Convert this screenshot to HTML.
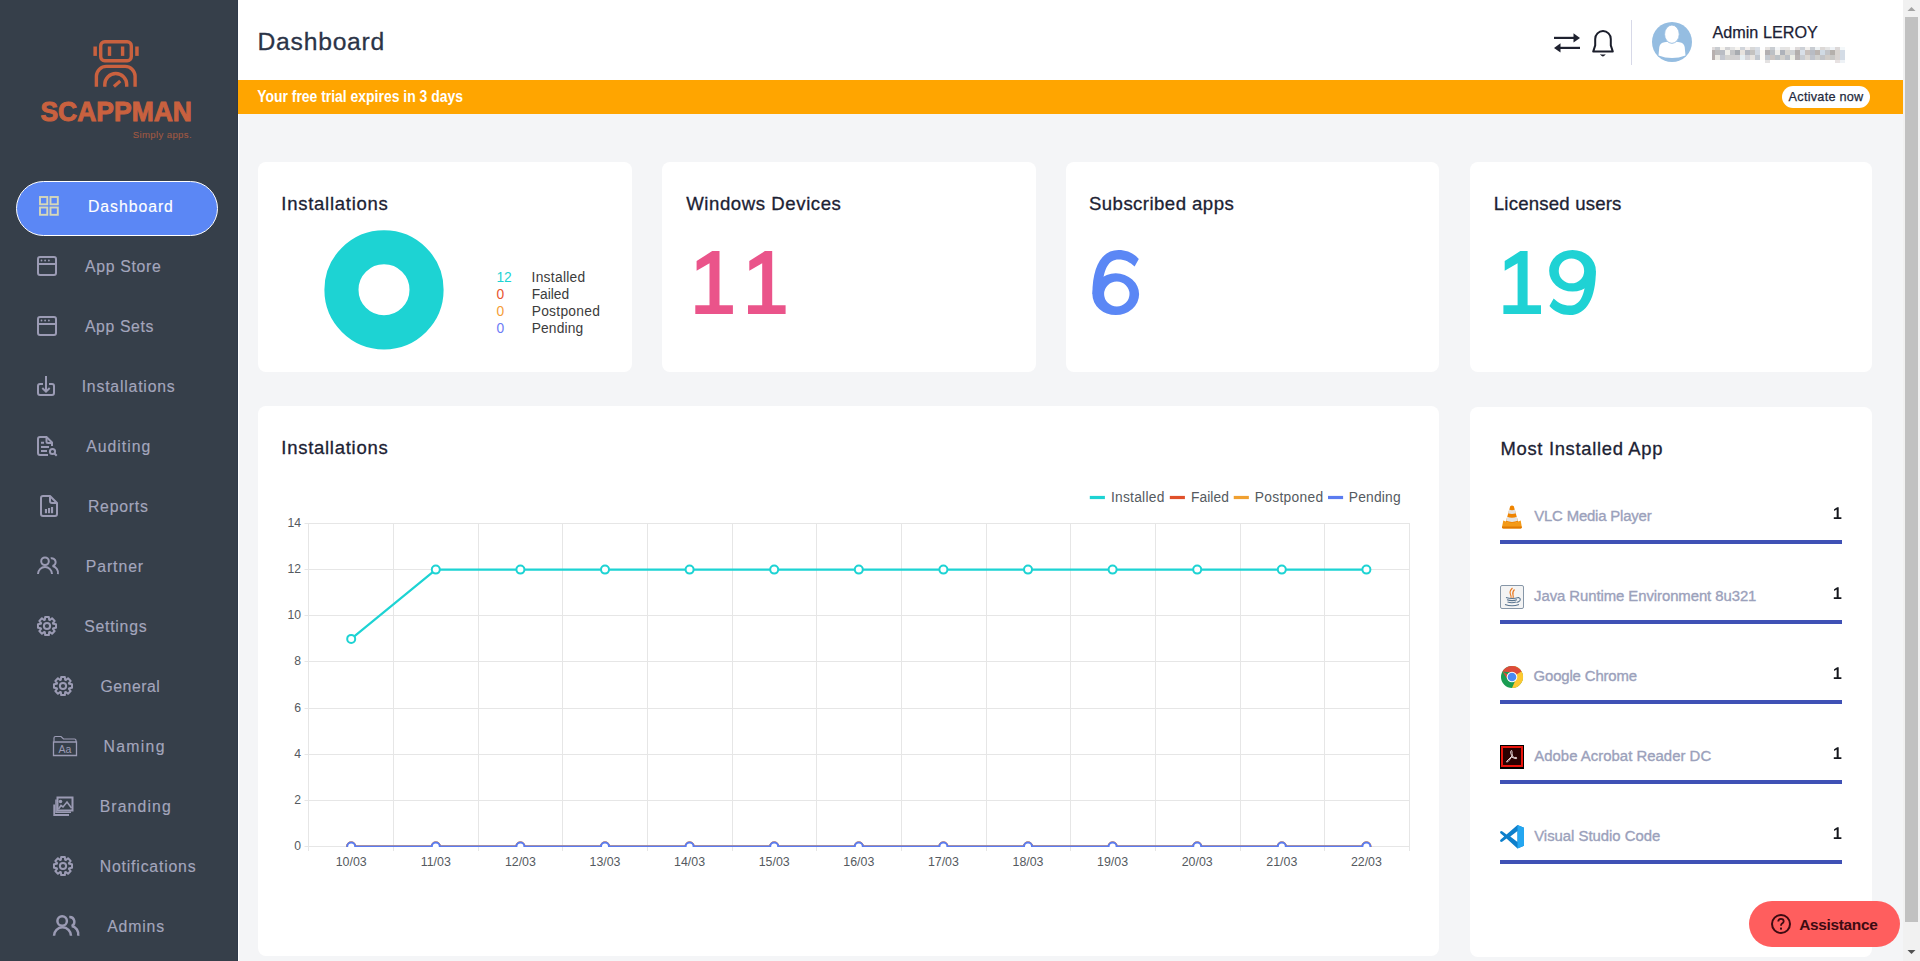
<!DOCTYPE html>
<html><head><meta charset="utf-8"><title>Dashboard</title>
<style>
html,body{margin:0;padding:0;}
body{width:1920px;height:961px;overflow:hidden;position:relative;background:#f4f5f7;font-family:"Liberation Sans",sans-serif;}
.t{position:absolute;white-space:nowrap;}
.a{position:absolute;overflow:visible;}
</style></head><body>
<div style="position:absolute;left:0;top:0;width:238px;height:961px;background:#363f4a"></div>
<div style="position:absolute;left:237px;top:0;width:1px;height:961px;background:#2f3a4b"></div>
<div style="position:absolute;left:238px;top:114px;width:1px;height:847px;background:#ffffff"></div>
<svg class="a" style="left:0;top:0" width="238" height="150" viewBox="0 0 238 150">
<g fill="none" stroke="#c9613f" stroke-width="3.4">
<rect x="100.7" y="41.7" width="30.6" height="19.1" rx="4"/>
<path d="M96.4 86.8 V76 a10 10 0 0 1 10 -9.6 H125.1 a10 10 0 0 1 10 9.6 V86.8"/>
<path d="M104.8 86.8 V84.5 a10.95 10.95 0 0 1 21.9 0 V86.8"/>
</g>
<g fill="#c9613f">
<rect x="93.4" y="46.5" width="3.5" height="9.4"/>
<rect x="135.2" y="46.5" width="3.5" height="9.4"/>
<rect x="107.8" y="46.5" width="3.4" height="9.4"/>
<rect x="120.9" y="46.5" width="3.4" height="9.4"/>
</g>
<path d="M113.9 86.5 L120.3 81" stroke="#c9613f" stroke-width="3.2" fill="none"/>
</svg>


<div style="position:absolute;left:16px;top:181px;width:200px;height:53px;border:1px solid #fff;border-radius:28px;background:#5b87f5"></div>
<svg class="a" style="left:39px;top:196px" width="21" height="21" viewBox="0 0 21 21"><g fill="none" stroke="#d5d7b9" stroke-width="1.9">
<rect x="1" y="1" width="7.3" height="7.3"/><rect x="11.5" y="1" width="7.3" height="7.3"/>
<rect x="1" y="11.5" width="7.3" height="7.3"/><rect x="11.5" y="11.5" width="7.3" height="7.3"/></g></svg>













<svg class="a" style="left:0;top:0" width="238" height="961" viewBox="0 0 238 961"><rect x="38" y="257" width="18" height="18" rx="2" fill="none" stroke="#9b9bb4" stroke-width="2"/><line x1="38" y1="264" x2="56" y2="264" stroke="#9b9bb4" stroke-width="2"/><circle cx="41.5" cy="260.5" r="0.9" fill="#9b9bb4"/><circle cx="45.1" cy="260.5" r="0.9" fill="#9b9bb4"/><circle cx="48.9" cy="260.5" r="0.9" fill="#9b9bb4"/><rect x="38" y="317" width="18" height="18" rx="2" fill="none" stroke="#9b9bb4" stroke-width="2"/><line x1="38" y1="324" x2="56" y2="324" stroke="#9b9bb4" stroke-width="2"/><circle cx="41.5" cy="320.5" r="0.9" fill="#9b9bb4"/><circle cx="45.1" cy="320.5" r="0.9" fill="#9b9bb4"/><circle cx="48.9" cy="320.5" r="0.9" fill="#9b9bb4"/><path d="M43 384 H40 a2 2 0 0 0 -2 2 V393 a2 2 0 0 0 2 2 H52 a2 2 0 0 0 2 -2 V386 a2 2 0 0 0 -2 -2 H49" fill="none" stroke="#9b9bb4" stroke-width="2"/><path d="M46 376 V391 M42.3 388 L46 391.6 L49.7 388" fill="none" stroke="#9b9bb4" stroke-width="2"/><path d="M48 455 H40 a2 2 0 0 1 -2 -2 V439 a2 2 0 0 1 2 -2 H46.5 L52 442.5 V446" fill="none" stroke="#9b9bb4" stroke-width="2"/><path d="M46.5 437 V441.5 a1.5 1.5 0 0 0 1.5 1.5 H52" fill="none" stroke="#9b9bb4" stroke-width="2"/><path d="M41 442.8 H44 M41 447 H49 M41 451 H47" stroke="#9b9bb4" stroke-width="2"/><circle cx="52.5" cy="451.5" r="2.6" fill="none" stroke="#9b9bb4" stroke-width="2"/><path d="M54.5 453.5 L56.7 455.7" stroke="#9b9bb4" stroke-width="2"/><path d="M50 496 H43 a2 2 0 0 0 -2 2 V514 a2 2 0 0 0 2 2 H55 a2 2 0 0 0 2 -2 V503 Z" fill="none" stroke="#9b9bb4" stroke-width="2" stroke-linejoin="round"/><path d="M50 496 V501 a2 2 0 0 0 2 2 H57" fill="none" stroke="#9b9bb4" stroke-width="2"/><rect x="44.9" y="509" width="2.1" height="4.2" fill="#9b9bb4"/><rect x="48" y="508" width="2.1" height="5.2" fill="#9b9bb4"/><rect x="51" y="507" width="2.1" height="6.2" fill="#9b9bb4"/><g transform="translate(37,555) scale(1.0)" fill="none" stroke="#9b9bb4" stroke-width="2.00" stroke-linecap="butt"><circle cx="8" cy="6.25" r="3.8"/><path d="M1 19.1 A7 7 0 0 1 15 19.1"/><path d="M13.75 3.3 A3.8 3.8 0 0 1 15.6 11"/><path d="M15.6 11 A7 7 0 0 1 20.9 19.1"/></g><polygon points="53.24,623.86 56.02,624.17 56.02,627.83 53.24,628.14 52.93,628.90 54.67,631.08 52.08,633.67 49.90,631.93 49.14,632.24 48.83,635.02 45.17,635.02 44.86,632.24 44.10,631.93 41.92,633.67 39.33,631.08 41.07,628.90 40.76,628.14 37.98,627.83 37.98,624.17 40.76,623.86 41.07,623.10 39.33,620.92 41.92,618.33 44.10,620.07 44.86,619.76 45.17,616.98 48.83,616.98 49.14,619.76 49.90,620.07 52.08,618.33 54.67,620.92 52.93,623.10" fill="none" stroke="#9b9bb4" stroke-width="2" stroke-linejoin="round"/><circle cx="47" cy="626" r="3.1" fill="none" stroke="#9b9bb4" stroke-width="2"/><polygon points="69.24,683.86 72.02,684.17 72.02,687.83 69.24,688.14 68.93,688.90 70.67,691.08 68.08,693.67 65.90,691.93 65.14,692.24 64.83,695.02 61.17,695.02 60.86,692.24 60.10,691.93 57.92,693.67 55.33,691.08 57.07,688.90 56.76,688.14 53.98,687.83 53.98,684.17 56.76,683.86 57.07,683.10 55.33,680.92 57.92,678.33 60.10,680.07 60.86,679.76 61.17,676.98 64.83,676.98 65.14,679.76 65.90,680.07 68.08,678.33 70.67,680.92 68.93,683.10" fill="none" stroke="#9b9bb4" stroke-width="2" stroke-linejoin="round"/><circle cx="63" cy="686" r="3.1" fill="none" stroke="#9b9bb4" stroke-width="2"/><polygon points="69.24,863.86 72.02,864.17 72.02,867.83 69.24,868.14 68.93,868.90 70.67,871.08 68.08,873.67 65.90,871.93 65.14,872.24 64.83,875.02 61.17,875.02 60.86,872.24 60.10,871.93 57.92,873.67 55.33,871.08 57.07,868.90 56.76,868.14 53.98,867.83 53.98,864.17 56.76,863.86 57.07,863.10 55.33,860.92 57.92,858.33 60.10,860.07 60.86,859.76 61.17,856.98 64.83,856.98 65.14,859.76 65.90,860.07 68.08,858.33 70.67,860.92 68.93,863.10" fill="none" stroke="#9b9bb4" stroke-width="2" stroke-linejoin="round"/><circle cx="63" cy="866" r="3.1" fill="none" stroke="#9b9bb4" stroke-width="2"/><path d="M54 741.5 V738 a1.5 1.5 0 0 1 1.5 -1.5 H61 L63.5 739 H74.5 a1.5 1.5 0 0 1 1.5 1.5 V742" fill="none" stroke="#9b9bb4" stroke-width="1.2"/><path d="M53.5 742 H76.5 V755.5 H53.5 Z" fill="none" stroke="#9b9bb4" stroke-width="1.3"/><text x="58.5" y="752.5" font-family="Liberation Sans" font-size="10.5" fill="#9b9bb4">Aa</text><rect x="57.5" y="797.5" width="15" height="13" fill="none" stroke="#9b9bb4" stroke-width="2"/><path d="M56 799.5 H56 V811.5 H70" fill="none" stroke="#9b9bb4" stroke-width="0"/><path d="M54.2 804.5 V815 H69" fill="none" stroke="#9b9bb4" stroke-width="1.8"/><path d="M56 799.5 V812.2 H71" fill="none" stroke="#9b9bb4" stroke-width="1.5"/><circle cx="60.5" cy="801.5" r="1.8" fill="#9b9bb4"/><path d="M58.5 809 L61 805.5 L63 807 L67 802 L71.5 808" fill="none" stroke="#9b9bb4" stroke-width="1.6"/><g fill="none" stroke="#9b9bb4" stroke-width="2.5"><circle cx="62.15" cy="920.9" r="4.75"/><path d="M54 935.8 A8.5 8.5 0 0 1 71 935.8"/><path d="M69.3 917 A4.75 4.75 0 0 1 71.7 926"/><path d="M71.7 926 A8.3 8.5 0 0 1 78.2 935.8"/></g></svg>
<div style="position:absolute;left:238px;top:0;width:1665px;height:80px;background:#fff"></div>

<svg class="a" style="left:1540px;top:10px" width="160" height="65" viewBox="0 0 160 65">
<g fill="#1f2230">
<rect x="14" y="26.8" width="20" height="2.2"/><path d="M33.5 23.3 L40 27.9 L33.5 32.5 Z"/>
<rect x="20" y="36.8" width="20" height="2.2"/><path d="M20.5 33.3 L14 37.9 L20.5 42.5 Z"/>
</g>
<path d="M53.2 41.6 H72.8 L70.8 35.4 V28.9 A7.8 7.8 0 0 0 55.2 28.9 V35.4 Z" fill="none" stroke="#1a1d2a" stroke-width="2" stroke-linejoin="round"/>
<path d="M60 43.9 Q62.9 45.3 65.8 43.9 Q63.5 47.2 62.3 46.2 Q61 45.6 60 43.9 Z" fill="#1a1d2a"/>
<rect x="91" y="10" width="1" height="45" fill="#d7d9e8"/>
<circle cx="132" cy="32" r="20" fill="#95bde1"/>
<path d="M118.5 45.5 L119.3 37 Q120 33 124.5 32.2 L127.5 31.8 Q132 35 136.5 31.8 L139.5 32.2 Q144 33 144.7 37 L145.5 45.5 Q132 50.5 118.5 45.5 Z" fill="#fff"/>
<ellipse cx="131.9" cy="24.2" rx="7.3" ry="9.1" fill="#fff" stroke="#95bde1" stroke-width="0.8"/>
</svg>

<svg class="a" style="left:0;top:0" width="1920" height="80" viewBox="0 0 1920 80"><rect x="1712" y="47" width="3" height="3" fill="#e0dcdc"/><rect x="1715" y="47" width="5" height="3" fill="#c9ccd0"/><rect x="1720" y="47" width="5" height="3" fill="#f5f3ef"/><rect x="1725" y="47" width="5" height="3" fill="#d2d2d4"/><rect x="1730" y="47" width="5" height="3" fill="#e4e4e4"/><rect x="1735" y="47" width="5" height="3" fill="#f7f5f1"/><rect x="1740" y="47" width="5" height="3" fill="#d0d4da"/><rect x="1745" y="47" width="5" height="3" fill="#f3efed"/><rect x="1750" y="47" width="5" height="3" fill="#d8d8d8"/><rect x="1755" y="47" width="5" height="3" fill="#d9dee5"/><rect x="1760" y="47" width="5" height="3" fill="#ffffff"/><rect x="1765" y="47" width="5" height="3" fill="#e5e2e0"/><rect x="1770" y="47" width="5" height="3" fill="#c9cdd2"/><rect x="1775" y="47" width="5" height="3" fill="#f4f6f8"/><rect x="1780" y="47" width="5" height="3" fill="#e4e4e4"/><rect x="1785" y="47" width="5" height="3" fill="#e6e4e2"/><rect x="1790" y="47" width="5" height="3" fill="#fafafa"/><rect x="1795" y="47" width="5" height="3" fill="#dedada"/><rect x="1800" y="47" width="5" height="3" fill="#ccd0d6"/><rect x="1805" y="47" width="5" height="3" fill="#f2f0ee"/><rect x="1810" y="47" width="5" height="3" fill="#c8ccd2"/><rect x="1815" y="47" width="5" height="3" fill="#eef2f4"/><rect x="1820" y="47" width="5" height="3" fill="#dcd8d6"/><rect x="1825" y="47" width="5" height="3" fill="#e4e4e4"/><rect x="1830" y="47" width="5" height="3" fill="#eef2f6"/><rect x="1835" y="47" width="5" height="3" fill="#dcd8d8"/><rect x="1840" y="47" width="5" height="3" fill="#f4f8fa"/><rect x="1712" y="50" width="3" height="5" fill="#b8b0ae"/><rect x="1715" y="50" width="5" height="5" fill="#bdbcbc"/><rect x="1720" y="50" width="5" height="5" fill="#b9bdc4"/><rect x="1725" y="50" width="5" height="5" fill="#efefea"/><rect x="1730" y="50" width="5" height="5" fill="#c4c4c6"/><rect x="1735" y="50" width="5" height="5" fill="#a8abb0"/><rect x="1740" y="50" width="5" height="5" fill="#e6e2de"/><rect x="1745" y="50" width="5" height="5" fill="#b4b8c0"/><rect x="1750" y="50" width="5" height="5" fill="#c4c2c0"/><rect x="1755" y="50" width="5" height="5" fill="#d4dae2"/><rect x="1760" y="50" width="5" height="5" fill="#fdfaf6"/><rect x="1765" y="50" width="5" height="5" fill="#b3afb0"/><rect x="1770" y="50" width="5" height="5" fill="#bcc0c4"/><rect x="1775" y="50" width="5" height="5" fill="#efeeea"/><rect x="1780" y="50" width="5" height="5" fill="#aeb2ba"/><rect x="1785" y="50" width="5" height="5" fill="#d6d4d0"/><rect x="1790" y="50" width="5" height="5" fill="#cfd2d4"/><rect x="1795" y="50" width="5" height="5" fill="#b2aeac"/><rect x="1800" y="50" width="5" height="5" fill="#d8dfe8"/><rect x="1805" y="50" width="5" height="5" fill="#c8c0bc"/><rect x="1810" y="50" width="5" height="5" fill="#b8bcc4"/><rect x="1815" y="50" width="5" height="5" fill="#bab4b0"/><rect x="1820" y="50" width="5" height="5" fill="#d0dae4"/><rect x="1825" y="50" width="5" height="5" fill="#c2c4c8"/><rect x="1830" y="50" width="5" height="5" fill="#b4b0ac"/><rect x="1835" y="50" width="5" height="5" fill="#d8d4d0"/><rect x="1840" y="50" width="5" height="5" fill="#d4dce6"/><rect x="1712" y="55" width="3" height="5" fill="#b8b0ae"/><rect x="1715" y="55" width="5" height="5" fill="#eceae4"/><rect x="1720" y="55" width="5" height="5" fill="#c4c8d0"/><rect x="1725" y="55" width="5" height="5" fill="#d4d4d2"/><rect x="1730" y="55" width="5" height="5" fill="#d2d0d0"/><rect x="1735" y="55" width="5" height="5" fill="#d2d0d2"/><rect x="1740" y="55" width="5" height="5" fill="#e6eef2"/><rect x="1745" y="55" width="5" height="5" fill="#d4d4d8"/><rect x="1750" y="55" width="5" height="5" fill="#e8e4e0"/><rect x="1755" y="55" width="5" height="5" fill="#c2c8d0"/><rect x="1760" y="55" width="5" height="5" fill="#fdfaf6"/><rect x="1765" y="55" width="5" height="5" fill="#c4c8ce"/><rect x="1770" y="55" width="5" height="5" fill="#ccc6c2"/><rect x="1775" y="55" width="5" height="5" fill="#bcc2c6"/><rect x="1780" y="55" width="5" height="5" fill="#d2d0cc"/><rect x="1785" y="55" width="5" height="5" fill="#bcc0c6"/><rect x="1790" y="55" width="5" height="5" fill="#eceee6"/><rect x="1795" y="55" width="5" height="5" fill="#b8b4b4"/><rect x="1800" y="55" width="5" height="5" fill="#c8ccd2"/><rect x="1805" y="55" width="5" height="5" fill="#dcd8d4"/><rect x="1810" y="55" width="5" height="5" fill="#c0c4cc"/><rect x="1815" y="55" width="5" height="5" fill="#d0d0ce"/><rect x="1820" y="55" width="5" height="5" fill="#c2c4c8"/><rect x="1825" y="55" width="5" height="5" fill="#d0ccc8"/><rect x="1830" y="55" width="5" height="5" fill="#c8c8c6"/><rect x="1835" y="55" width="5" height="5" fill="#d8d4d2"/><rect x="1840" y="55" width="5" height="5" fill="#d4dce6"/><rect x="1765" y="60" width="5" height="3" fill="#e4e2e2"/><rect x="1835" y="60" width="5" height="3" fill="#e8e2e2"/><rect x="1840" y="60" width="5" height="3" fill="#eef2f6"/></svg>
<div style="position:absolute;left:238px;top:80px;width:1665px;height:34px;background:#ffa500"></div>

<div style="position:absolute;left:1782px;top:86px;width:88px;height:22px;border-radius:11px;background:#fff"></div>

<div style="position:absolute;left:258px;top:162px;width:374px;height:210px;background:#fff;border-radius:8px"></div>
<div style="position:absolute;left:662px;top:162px;width:374px;height:210px;background:#fff;border-radius:8px"></div>
<div style="position:absolute;left:1066px;top:162px;width:373px;height:210px;background:#fff;border-radius:8px"></div>
<div style="position:absolute;left:1470px;top:162px;width:402px;height:210px;background:#fff;border-radius:8px"></div>
<div style="position:absolute;left:258px;top:406px;width:1181px;height:550px;background:#fff;border-radius:8px"></div>
<div style="position:absolute;left:1470px;top:407px;width:402px;height:550px;background:#fff;border-radius:8px"></div>






<svg class="a" style="left:314px;top:220px" width="140" height="140" viewBox="0 0 140 140">
<circle cx="70" cy="69.8" r="42.55" fill="none" stroke="#1dd3d3" stroke-width="34.1"/></svg>








<svg class="a" style="left:0;top:0" width="1920" height="400" viewBox="0 0 1920 400"><polygon fill="#ea548a" points="712.20,251.10 719.50,251.10 719.50,305.20 732.90,305.20 732.90,314.00 695.30,314.00 695.30,305.20 709.50,305.20 709.50,263.30 696.60,270.70 696.60,261.00"/><polygon fill="#ea548a" points="764.90,251.10 772.20,251.10 772.20,305.20 785.60,305.20 785.60,314.00 748.00,314.00 748.00,305.20 762.20,305.20 762.20,263.30 749.30,270.70 749.30,261.00"/><polygon fill="#1fd2d4" points="1520.30,251.10 1527.60,251.10 1527.60,305.20 1541.00,305.20 1541.00,314.00 1503.40,314.00 1503.40,305.20 1517.60,305.20 1517.60,263.30 1504.70,270.70 1504.70,261.00"/></svg>
<svg class="a" style="left:0;top:0" width="1920" height="400" viewBox="0 0 1920 400"><g fill="#5b87f5"><path fill-rule="evenodd" d="M1139.1 294.15 A23.35 20.85 0 1 1 1092.4 294.15 A23.35 20.85 0 1 1 1139.1 294.15 Z M1129.5 294 A12.7 12.45 0 1 0 1104.1 294 A12.7 12.45 0 1 0 1129.5 294 Z"/><path d="M1092.4 294 C1092.4 268, 1101 249.9, 1118.5 249.9 C1127 249.9, 1134 253.3, 1138.8 258.9 L1134.6 266.5 C1130 262, 1125 259.4, 1118.5 259.4 C1109 259.4, 1102.3 268, 1102.3 294 Z"/></g><g fill="#1fd2d4" transform="translate(1572.5 282.45) rotate(180) translate(-1115.75 -282.45)"><path fill-rule="evenodd" d="M1139.1 294.15 A23.35 20.85 0 1 1 1092.4 294.15 A23.35 20.85 0 1 1 1139.1 294.15 Z M1129.5 294 A12.7 12.45 0 1 0 1104.1 294 A12.7 12.45 0 1 0 1129.5 294 Z"/><path d="M1092.4 294 C1092.4 268, 1101 249.9, 1118.5 249.9 C1127 249.9, 1134 253.3, 1138.8 258.9 L1134.6 266.5 C1130 262, 1125 259.4, 1118.5 259.4 C1109 259.4, 1102.3 268, 1102.3 294 Z"/></g></svg>
<svg class="a" style="left:0;top:0" width="1920" height="961" viewBox="0 0 1920 961"><line x1="304.5" y1="846.5" x2="1410" y2="846.5" stroke="#e6e6e6" stroke-width="1"/><line x1="304.5" y1="800.5" x2="1410" y2="800.5" stroke="#e6e6e6" stroke-width="1"/><line x1="304.5" y1="754.5" x2="1410" y2="754.5" stroke="#e6e6e6" stroke-width="1"/><line x1="304.5" y1="708.5" x2="1410" y2="708.5" stroke="#e6e6e6" stroke-width="1"/><line x1="304.5" y1="661.5" x2="1410" y2="661.5" stroke="#e6e6e6" stroke-width="1"/><line x1="304.5" y1="615.5" x2="1410" y2="615.5" stroke="#e6e6e6" stroke-width="1"/><line x1="304.5" y1="569.5" x2="1410" y2="569.5" stroke="#e6e6e6" stroke-width="1"/><line x1="304.5" y1="523.5" x2="1410" y2="523.5" stroke="#e6e6e6" stroke-width="1"/><line x1="308.5" y1="523" x2="308.5" y2="851" stroke="#e6e6e6" stroke-width="1"/><line x1="393.5" y1="523" x2="393.5" y2="851" stroke="#e6e6e6" stroke-width="1"/><line x1="478.5" y1="523" x2="478.5" y2="851" stroke="#e6e6e6" stroke-width="1"/><line x1="562.5" y1="523" x2="562.5" y2="851" stroke="#e6e6e6" stroke-width="1"/><line x1="647.5" y1="523" x2="647.5" y2="851" stroke="#e6e6e6" stroke-width="1"/><line x1="732.5" y1="523" x2="732.5" y2="851" stroke="#e6e6e6" stroke-width="1"/><line x1="816.5" y1="523" x2="816.5" y2="851" stroke="#e6e6e6" stroke-width="1"/><line x1="901.5" y1="523" x2="901.5" y2="851" stroke="#e6e6e6" stroke-width="1"/><line x1="986.5" y1="523" x2="986.5" y2="851" stroke="#e6e6e6" stroke-width="1"/><line x1="1070.5" y1="523" x2="1070.5" y2="851" stroke="#e6e6e6" stroke-width="1"/><line x1="1155.5" y1="523" x2="1155.5" y2="851" stroke="#e6e6e6" stroke-width="1"/><line x1="1240.5" y1="523" x2="1240.5" y2="851" stroke="#e6e6e6" stroke-width="1"/><line x1="1324.5" y1="523" x2="1324.5" y2="851" stroke="#e6e6e6" stroke-width="1"/><line x1="1409.5" y1="523" x2="1409.5" y2="851" stroke="#e6e6e6" stroke-width="1"/><polyline fill="none" stroke="#1dd3d3" stroke-width="2.2" points="351.2,638.9 435.8,569.6 520.4,569.6 605.0,569.6 689.6,569.6 774.2,569.6 858.8,569.6 943.4,569.6 1028.0,569.6 1112.6,569.6 1197.2,569.6 1281.8,569.6 1366.4,569.6"/><circle cx="351.2" cy="638.9" r="4" fill="#fff" stroke="#1dd3d3" stroke-width="2"/><circle cx="435.8" cy="569.6" r="4" fill="#fff" stroke="#1dd3d3" stroke-width="2"/><circle cx="520.4" cy="569.6" r="4" fill="#fff" stroke="#1dd3d3" stroke-width="2"/><circle cx="605.0" cy="569.6" r="4" fill="#fff" stroke="#1dd3d3" stroke-width="2"/><circle cx="689.6" cy="569.6" r="4" fill="#fff" stroke="#1dd3d3" stroke-width="2"/><circle cx="774.2" cy="569.6" r="4" fill="#fff" stroke="#1dd3d3" stroke-width="2"/><circle cx="858.8" cy="569.6" r="4" fill="#fff" stroke="#1dd3d3" stroke-width="2"/><circle cx="943.4" cy="569.6" r="4" fill="#fff" stroke="#1dd3d3" stroke-width="2"/><circle cx="1028.0" cy="569.6" r="4" fill="#fff" stroke="#1dd3d3" stroke-width="2"/><circle cx="1112.6" cy="569.6" r="4" fill="#fff" stroke="#1dd3d3" stroke-width="2"/><circle cx="1197.2" cy="569.6" r="4" fill="#fff" stroke="#1dd3d3" stroke-width="2"/><circle cx="1281.8" cy="569.6" r="4" fill="#fff" stroke="#1dd3d3" stroke-width="2"/><circle cx="1366.4" cy="569.6" r="4" fill="#fff" stroke="#1dd3d3" stroke-width="2"/><defs><clipPath id="cp"><rect x="300" y="500" width="1120" height="347"/></clipPath></defs><g clip-path="url(#cp)"><polyline fill="none" stroke="#e0502a" stroke-width="2.2" points="351.2,846.5 435.8,846.5 520.4,846.5 605.0,846.5 689.6,846.5 774.2,846.5 858.8,846.5 943.4,846.5 1028.0,846.5 1112.6,846.5 1197.2,846.5 1281.8,846.5 1366.4,846.5"/><circle cx="351.2" cy="846.5" r="4" fill="#fff" stroke="#e0502a" stroke-width="2"/><circle cx="435.8" cy="846.5" r="4" fill="#fff" stroke="#e0502a" stroke-width="2"/><circle cx="520.4" cy="846.5" r="4" fill="#fff" stroke="#e0502a" stroke-width="2"/><circle cx="605.0" cy="846.5" r="4" fill="#fff" stroke="#e0502a" stroke-width="2"/><circle cx="689.6" cy="846.5" r="4" fill="#fff" stroke="#e0502a" stroke-width="2"/><circle cx="774.2" cy="846.5" r="4" fill="#fff" stroke="#e0502a" stroke-width="2"/><circle cx="858.8" cy="846.5" r="4" fill="#fff" stroke="#e0502a" stroke-width="2"/><circle cx="943.4" cy="846.5" r="4" fill="#fff" stroke="#e0502a" stroke-width="2"/><circle cx="1028.0" cy="846.5" r="4" fill="#fff" stroke="#e0502a" stroke-width="2"/><circle cx="1112.6" cy="846.5" r="4" fill="#fff" stroke="#e0502a" stroke-width="2"/><circle cx="1197.2" cy="846.5" r="4" fill="#fff" stroke="#e0502a" stroke-width="2"/><circle cx="1281.8" cy="846.5" r="4" fill="#fff" stroke="#e0502a" stroke-width="2"/><circle cx="1366.4" cy="846.5" r="4" fill="#fff" stroke="#e0502a" stroke-width="2"/><polyline fill="none" stroke="#f0a030" stroke-width="2.2" points="351.2,846.5 435.8,846.5 520.4,846.5 605.0,846.5 689.6,846.5 774.2,846.5 858.8,846.5 943.4,846.5 1028.0,846.5 1112.6,846.5 1197.2,846.5 1281.8,846.5 1366.4,846.5"/><circle cx="351.2" cy="846.5" r="4" fill="#fff" stroke="#f0a030" stroke-width="2"/><circle cx="435.8" cy="846.5" r="4" fill="#fff" stroke="#f0a030" stroke-width="2"/><circle cx="520.4" cy="846.5" r="4" fill="#fff" stroke="#f0a030" stroke-width="2"/><circle cx="605.0" cy="846.5" r="4" fill="#fff" stroke="#f0a030" stroke-width="2"/><circle cx="689.6" cy="846.5" r="4" fill="#fff" stroke="#f0a030" stroke-width="2"/><circle cx="774.2" cy="846.5" r="4" fill="#fff" stroke="#f0a030" stroke-width="2"/><circle cx="858.8" cy="846.5" r="4" fill="#fff" stroke="#f0a030" stroke-width="2"/><circle cx="943.4" cy="846.5" r="4" fill="#fff" stroke="#f0a030" stroke-width="2"/><circle cx="1028.0" cy="846.5" r="4" fill="#fff" stroke="#f0a030" stroke-width="2"/><circle cx="1112.6" cy="846.5" r="4" fill="#fff" stroke="#f0a030" stroke-width="2"/><circle cx="1197.2" cy="846.5" r="4" fill="#fff" stroke="#f0a030" stroke-width="2"/><circle cx="1281.8" cy="846.5" r="4" fill="#fff" stroke="#f0a030" stroke-width="2"/><circle cx="1366.4" cy="846.5" r="4" fill="#fff" stroke="#f0a030" stroke-width="2"/><polyline fill="none" stroke="#5b7cf0" stroke-width="2.2" points="351.2,846.5 435.8,846.5 520.4,846.5 605.0,846.5 689.6,846.5 774.2,846.5 858.8,846.5 943.4,846.5 1028.0,846.5 1112.6,846.5 1197.2,846.5 1281.8,846.5 1366.4,846.5"/><circle cx="351.2" cy="846.5" r="4" fill="#fff" stroke="#5b7cf0" stroke-width="2"/><circle cx="435.8" cy="846.5" r="4" fill="#fff" stroke="#5b7cf0" stroke-width="2"/><circle cx="520.4" cy="846.5" r="4" fill="#fff" stroke="#5b7cf0" stroke-width="2"/><circle cx="605.0" cy="846.5" r="4" fill="#fff" stroke="#5b7cf0" stroke-width="2"/><circle cx="689.6" cy="846.5" r="4" fill="#fff" stroke="#5b7cf0" stroke-width="2"/><circle cx="774.2" cy="846.5" r="4" fill="#fff" stroke="#5b7cf0" stroke-width="2"/><circle cx="858.8" cy="846.5" r="4" fill="#fff" stroke="#5b7cf0" stroke-width="2"/><circle cx="943.4" cy="846.5" r="4" fill="#fff" stroke="#5b7cf0" stroke-width="2"/><circle cx="1028.0" cy="846.5" r="4" fill="#fff" stroke="#5b7cf0" stroke-width="2"/><circle cx="1112.6" cy="846.5" r="4" fill="#fff" stroke="#5b7cf0" stroke-width="2"/><circle cx="1197.2" cy="846.5" r="4" fill="#fff" stroke="#5b7cf0" stroke-width="2"/><circle cx="1281.8" cy="846.5" r="4" fill="#fff" stroke="#5b7cf0" stroke-width="2"/><circle cx="1366.4" cy="846.5" r="4" fill="#fff" stroke="#5b7cf0" stroke-width="2"/></g><rect x="1089.8" y="495.9" width="15.1" height="3.2" fill="#1dd3d3"/><rect x="1169.8" y="495.9" width="15.1" height="3.2" fill="#e0502a"/><rect x="1233.75" y="495.9" width="15.1" height="3.2" fill="#f0a030"/><rect x="1328" y="495.9" width="15.1" height="3.2" fill="#5b7cf0"/></svg>





<div style="position:absolute;left:1500px;top:540px;width:342px;height:4px;background:#3f51b5"></div>

<div style="position:absolute;left:1500px;top:620px;width:342px;height:4px;background:#3f51b5"></div>

<div style="position:absolute;left:1500px;top:700px;width:342px;height:4px;background:#3f51b5"></div>

<div style="position:absolute;left:1500px;top:780px;width:342px;height:4px;background:#3f51b5"></div>

<div style="position:absolute;left:1500px;top:860px;width:342px;height:4px;background:#3f51b5"></div>
<svg class="a" style="left:0;top:0" width="1920" height="961" viewBox="0 0 1920 961"><g transform="translate(1833.8 507.3) scale(0.202 0.186)"><polygon fill="#15171d" points="16.9,0 24.2,0 24.2,54.1 37.6,54.1 37.6,62.9 0,62.9 0,54.1 14.2,54.1 14.2,12.2 1.3,19.6 1.3,9.9"/></g><g transform="translate(1833.8 587.3) scale(0.202 0.186)"><polygon fill="#15171d" points="16.9,0 24.2,0 24.2,54.1 37.6,54.1 37.6,62.9 0,62.9 0,54.1 14.2,54.1 14.2,12.2 1.3,19.6 1.3,9.9"/></g><g transform="translate(1833.8 667.3) scale(0.202 0.186)"><polygon fill="#15171d" points="16.9,0 24.2,0 24.2,54.1 37.6,54.1 37.6,62.9 0,62.9 0,54.1 14.2,54.1 14.2,12.2 1.3,19.6 1.3,9.9"/></g><g transform="translate(1833.8 747.3) scale(0.202 0.186)"><polygon fill="#15171d" points="16.9,0 24.2,0 24.2,54.1 37.6,54.1 37.6,62.9 0,62.9 0,54.1 14.2,54.1 14.2,12.2 1.3,19.6 1.3,9.9"/></g><g transform="translate(1833.8 827.3) scale(0.202 0.186)"><polygon fill="#15171d" points="16.9,0 24.2,0 24.2,54.1 37.6,54.1 37.6,62.9 0,62.9 0,54.1 14.2,54.1 14.2,12.2 1.3,19.6 1.3,9.9"/></g><path d="M1510.2 506.2 Q1512 504.6 1513.8 506.2 L1518.2 522 Q1512 524.6 1505.8 522 Z" fill="#ef8400"/>
<path d="M1509 509.6 Q1512 511 1515 509.6 L1515.9 513.2 Q1512 514.8 1508.1 513.2 Z" fill="#e2e2e2"/>
<path d="M1507.1 516.8 Q1512 518.8 1516.9 516.8 L1517.8 520.8 Q1512 523 1506.2 520.8 Z" fill="#e4e4e4"/>
<path d="M1503.3 520.6 Q1512 525 1520.7 520.6 L1521.8 527 Q1521.8 528.4 1520.5 528.4 H1503.3 Q1502 528.4 1502 527 Z" fill="#f39a18"/>
<path d="M1502 526.6 H1521.8 V527.2 Q1521.8 528.4 1520.5 528.4 H1503.3 Q1502 528.4 1502 527.2 Z" fill="#e07800"/><g transform="translate(1500,585)">
<rect x="0.5" y="0.5" width="23" height="23" rx="1.5" fill="#f4f4f4" stroke="#8797a8" stroke-width="1"/>
<path d="M12.5 3 Q9 6 10.5 9.5 Q11.5 11.5 11 13 M14.5 4.5 Q12 7 13 10 Q13.5 11.5 13 13" fill="none" stroke="#e8761c" stroke-width="1.1"/>
<path d="M6 12.5 Q12 14.5 18.5 12.5 M7 14.8 Q12 16.5 17 14.8 M7.5 17 Q12 18.5 16 17 M5 19.5 Q12 22 19 19.5 M18 12.5 Q21 13 20 15.5 Q19 17 16.5 17.5" fill="none" stroke="#5a7590" stroke-width="1.1"/>
</g><g transform="translate(1512,677)">
<circle r="11" fill="#1a9d52"/>
<path d="M0 -11 A11 11 0 0 1 9.53 5.5 L0 0 Z" fill="#fdc830" transform="rotate(0)"/>
<path d="M-9.53 -5.5 A11 11 0 0 1 9.53 -5.5 L3.5 -2 L0 -4.5 Z" fill="#dd4b3a"/>
<path d="M9.53 -5.5 A11 11 0 0 1 0 11 L3.5 3 Z" fill="#fdc830"/>
<path d="M-9.53 -5.5 L-4 3 L0 0 Z" fill="#dd4b3a"/>
<circle r="5.3" fill="#fff"/><circle r="4.3" fill="#4a8af4"/>
</g><g transform="translate(1500,745)">
<rect x="0" y="0" width="24" height="24" fill="#000"/>
<rect x="1" y="1" width="22" height="21" fill="#e9140b"/>
<rect x="3" y="3" width="18" height="17" fill="#2a0000"/>
<path d="M11.3 5.5 Q10 6.5 11 9 L12 11 L8 15 Q6.5 16.5 6.5 17 Q7.5 17.5 9 15.5 L11.5 12 L15 13.5 Q17 14 17 13 Q16.5 12 14.5 12.5 L12.5 11.5 Q12 8 12 6.5 Q11.8 5 11.3 5.5 Z" fill="none" stroke="#f5e6e6" stroke-width="0.9"/>
</g><g transform="translate(1500,824.5)">
<path d="M17.5 0.5 L24 3.2 V21.3 L17.5 24 L6.5 14 L2.5 17 Q1 18 0.2 16.8 Q-0.3 15.8 0.7 15 L4.2 12 L0.7 9 Q-0.3 8.2 0.2 7.2 Q1 6 2.5 7 L6.5 10 Z M17.5 6.5 L10.3 12 L17.5 17.5 Z" fill="#0d7fcb" fill-rule="evenodd"/>
<path d="M17.5 0.5 L24 3.2 V21.3 L17.5 24 Z" fill="#24a6f0"/>
</g></svg>
<div style="position:absolute;left:1749px;top:901px;width:151px;height:46px;border-radius:23px;background:#ff5e5e"></div>
<svg class="a" style="left:1770px;top:913px" width="22" height="22" viewBox="0 0 22 22">
<circle cx="11" cy="11" r="9" fill="none" stroke="#3d0b12" stroke-width="2"/>
<path d="M8.3 8.6 Q8.3 5.8 11 5.8 Q13.7 5.8 13.7 8.3 Q13.7 9.8 12 10.6 Q11 11.2 11 12.8" fill="none" stroke="#3d0b12" stroke-width="1.8"/>
<rect x="10" y="14.6" width="2" height="2" fill="#3d0b12"/></svg>

<div style="position:absolute;left:1903px;top:0;width:17px;height:961px;background:#f1f1f1"></div>
<div style="position:absolute;left:1905px;top:17px;width:13px;height:905px;background:#c1c1c1"></div>
<svg class="a" style="left:1903px;top:0" width="17" height="961" viewBox="0 0 17 961">
<path d="M4.5 11 L8.5 7 L12.5 11 Z" fill="#a3a3a3"/><path d="M4.5 950 L8.5 954 L12.5 950 Z" fill="#505050"/></svg>
<svg class="a" style="left:0;top:0" width="1920" height="961" viewBox="0 0 1920 961" font-family="Liberation Sans"><text x="40.46" y="121" font-size="28.0" font-weight="700" fill="#c9613f" stroke="#c9613f" stroke-width="1.0" textLength="151.51" lengthAdjust="spacingAndGlyphs" style="letter-spacing:0.000px">SCAPPMAN</text><text x="132.77" y="138" font-size="9.6" font-weight="400" fill="#9e5843" stroke="#9e5843" stroke-width="0.15" style="letter-spacing:0.359px">Simply apps.</text><text x="88.00" y="212" font-size="15.8" font-weight="400" fill="#ffffff" stroke="#ffffff" stroke-width="0.15" style="letter-spacing:0.952px">Dashboard</text><text x="84.97" y="272" font-size="15.8" font-weight="400" fill="#a4a6bd" stroke="#a4a6bd" stroke-width="0.15" style="letter-spacing:0.683px">App Store</text><text x="84.97" y="332" font-size="15.8" font-weight="400" fill="#a4a6bd" stroke="#a4a6bd" stroke-width="0.15" style="letter-spacing:0.612px">App Sets</text><text x="81.65" y="392" font-size="15.8" font-weight="400" fill="#a4a6bd" stroke="#a4a6bd" stroke-width="0.15" style="letter-spacing:0.807px">Installations</text><text x="86.17" y="452" font-size="15.8" font-weight="400" fill="#a4a6bd" stroke="#a4a6bd" stroke-width="0.15" style="letter-spacing:1.020px">Auditing</text><text x="87.90" y="512" font-size="15.8" font-weight="400" fill="#a4a6bd" stroke="#a4a6bd" stroke-width="0.15" style="letter-spacing:0.791px">Reports</text><text x="85.70" y="572" font-size="15.8" font-weight="400" fill="#a4a6bd" stroke="#a4a6bd" stroke-width="0.15" style="letter-spacing:0.940px">Partner</text><text x="84.29" y="632" font-size="15.8" font-weight="400" fill="#a4a6bd" stroke="#a4a6bd" stroke-width="0.15" style="letter-spacing:0.742px">Settings</text><text x="100.41" y="692" font-size="15.8" font-weight="400" fill="#a4a6bd" stroke="#a4a6bd" stroke-width="0.15" style="letter-spacing:0.539px">General</text><text x="103.50" y="752" font-size="15.8" font-weight="400" fill="#a4a6bd" stroke="#a4a6bd" stroke-width="0.15" style="letter-spacing:1.312px">Naming</text><text x="99.70" y="812" font-size="15.8" font-weight="400" fill="#a4a6bd" stroke="#a4a6bd" stroke-width="0.15" style="letter-spacing:1.108px">Branding</text><text x="99.70" y="872" font-size="15.8" font-weight="400" fill="#a4a6bd" stroke="#a4a6bd" stroke-width="0.15" style="letter-spacing:0.825px">Notifications</text><text x="107.27" y="932" font-size="15.8" font-weight="400" fill="#a4a6bd" stroke="#a4a6bd" stroke-width="0.15" style="letter-spacing:0.821px">Admins</text><text x="257.47" y="50" font-size="24.7" font-weight="400" fill="#2b3447" stroke="#2b3447" stroke-width="0.3" style="letter-spacing:0.759px">Dashboard</text><text x="1712.47" y="38" font-size="16.2" font-weight="400" fill="#1b2135" stroke="#1b2135" stroke-width="0.25" style="letter-spacing:0.006px">Admin LEROY</text><text x="257.16" y="101.5" font-size="15.6" font-weight="700" fill="#ffffff" textLength="205.79" lengthAdjust="spacingAndGlyphs" style="letter-spacing:0.000px">Your free trial expires in 3 days</text><text x="1788.57" y="101" font-size="12.7" font-weight="400" fill="#232a3d" stroke="#232a3d" stroke-width="0.25" style="letter-spacing:0.254px">Activate now</text><text x="281.30" y="210" font-size="18.5" font-weight="400" fill="#1c2233" stroke="#1c2233" stroke-width="0.3" style="letter-spacing:0.739px">Installations</text><text x="686.23" y="210" font-size="18.6" font-weight="400" fill="#1c2233" stroke="#1c2233" stroke-width="0.3" style="letter-spacing:0.569px">Windows Devices</text><text x="1088.96" y="210" font-size="18.6" font-weight="400" fill="#1c2233" stroke="#1c2233" stroke-width="0.3" style="letter-spacing:0.447px">Subscribed apps</text><text x="1493.77" y="210" font-size="18.6" font-weight="400" fill="#1c2233" stroke="#1c2233" stroke-width="0.3" style="letter-spacing:0.199px">Licensed users</text><text x="281.30" y="454" font-size="18.5" font-weight="400" fill="#1c2233" stroke="#1c2233" stroke-width="0.3" style="letter-spacing:0.722px">Installations</text><text x="1500.49" y="455" font-size="18.4" font-weight="400" fill="#1c2233" stroke="#1c2233" stroke-width="0.3" style="letter-spacing:0.689px">Most Installed App</text><text x="496.45" y="282" font-size="13.8" font-weight="400" fill="#1dd3d3" style="letter-spacing:0.000px">12</text><text x="531.53" y="282" font-size="13.8" font-weight="400" fill="#3c3c3c" style="letter-spacing:0.295px">Installed</text><text x="496.46" y="299" font-size="13.8" font-weight="400" fill="#e8552f" style="letter-spacing:0.000px">0</text><text x="531.67" y="299" font-size="13.8" font-weight="400" fill="#3c3c3c" style="letter-spacing:-0.035px">Failed</text><text x="496.46" y="316" font-size="13.8" font-weight="400" fill="#f59d37" style="letter-spacing:0.000px">0</text><text x="531.67" y="316" font-size="13.8" font-weight="400" fill="#3c3c3c" style="letter-spacing:0.278px">Postponed</text><text x="496.46" y="333" font-size="13.8" font-weight="400" fill="#6d7cf6" style="letter-spacing:0.000px">0</text><text x="531.67" y="333" font-size="13.8" font-weight="400" fill="#3c3c3c" style="letter-spacing:0.145px">Pending</text><text x="301" y="850" font-size="12.2" fill="#555a60" text-anchor="end">0</text><text x="301" y="804" font-size="12.2" fill="#555a60" text-anchor="end">2</text><text x="301" y="758" font-size="12.2" fill="#555a60" text-anchor="end">4</text><text x="301" y="712" font-size="12.2" fill="#555a60" text-anchor="end">6</text><text x="301" y="665" font-size="12.2" fill="#555a60" text-anchor="end">8</text><text x="301" y="619" font-size="12.2" fill="#555a60" text-anchor="end">10</text><text x="301" y="573" font-size="12.2" fill="#555a60" text-anchor="end">12</text><text x="301" y="527" font-size="12.2" fill="#555a60" text-anchor="end">14</text><text x="351.20" y="866" font-size="12.4" fill="#555a60" text-anchor="middle">10/03</text><text x="435.80" y="866" font-size="12.4" fill="#555a60" text-anchor="middle">11/03</text><text x="520.40" y="866" font-size="12.4" fill="#555a60" text-anchor="middle">12/03</text><text x="605.00" y="866" font-size="12.4" fill="#555a60" text-anchor="middle">13/03</text><text x="689.60" y="866" font-size="12.4" fill="#555a60" text-anchor="middle">14/03</text><text x="774.20" y="866" font-size="12.4" fill="#555a60" text-anchor="middle">15/03</text><text x="858.80" y="866" font-size="12.4" fill="#555a60" text-anchor="middle">16/03</text><text x="943.40" y="866" font-size="12.4" fill="#555a60" text-anchor="middle">17/03</text><text x="1028.00" y="866" font-size="12.4" fill="#555a60" text-anchor="middle">18/03</text><text x="1112.60" y="866" font-size="12.4" fill="#555a60" text-anchor="middle">19/03</text><text x="1197.20" y="866" font-size="12.4" fill="#555a60" text-anchor="middle">20/03</text><text x="1281.80" y="866" font-size="12.4" fill="#555a60" text-anchor="middle">21/03</text><text x="1366.40" y="866" font-size="12.4" fill="#555a60" text-anchor="middle">22/03</text><text x="1110.93" y="502" font-size="13.8" font-weight="400" fill="#555a60" style="letter-spacing:0.258px">Installed</text><text x="1191.07" y="502" font-size="13.8" font-weight="400" fill="#555a60" style="letter-spacing:0.045px">Failed</text><text x="1254.67" y="502" font-size="13.8" font-weight="400" fill="#555a60" style="letter-spacing:0.315px">Postponed</text><text x="1348.87" y="502" font-size="13.8" font-weight="400" fill="#555a60" style="letter-spacing:0.195px">Pending</text><text x="1534.24" y="521" font-size="14.9" font-weight="400" fill="#9ba1bb" stroke="#9ba1bb" stroke-width="0.35" style="letter-spacing:-0.172px">VLC Media Player</text><text x="1534.08" y="601" font-size="14.9" font-weight="400" fill="#9ba1bb" stroke="#9ba1bb" stroke-width="0.35" style="letter-spacing:-0.069px">Java Runtime Environment 8u321</text><text x="1533.56" y="681" font-size="14.9" font-weight="400" fill="#9ba1bb" stroke="#9ba1bb" stroke-width="0.35" style="letter-spacing:-0.132px">Google Chrome</text><text x="1534.27" y="761" font-size="14.9" font-weight="400" fill="#9ba1bb" stroke="#9ba1bb" stroke-width="0.35" style="letter-spacing:0.026px">Adobe Acrobat Reader DC</text><text x="1534.24" y="841" font-size="14.9" font-weight="400" fill="#9ba1bb" stroke="#9ba1bb" stroke-width="0.35" style="letter-spacing:-0.026px">Visual Studio Code</text><text x="1799.13" y="930" font-size="15.4" font-weight="700" fill="#3d0b12" style="letter-spacing:-0.293px">Assistance</text></svg>
</body></html>
